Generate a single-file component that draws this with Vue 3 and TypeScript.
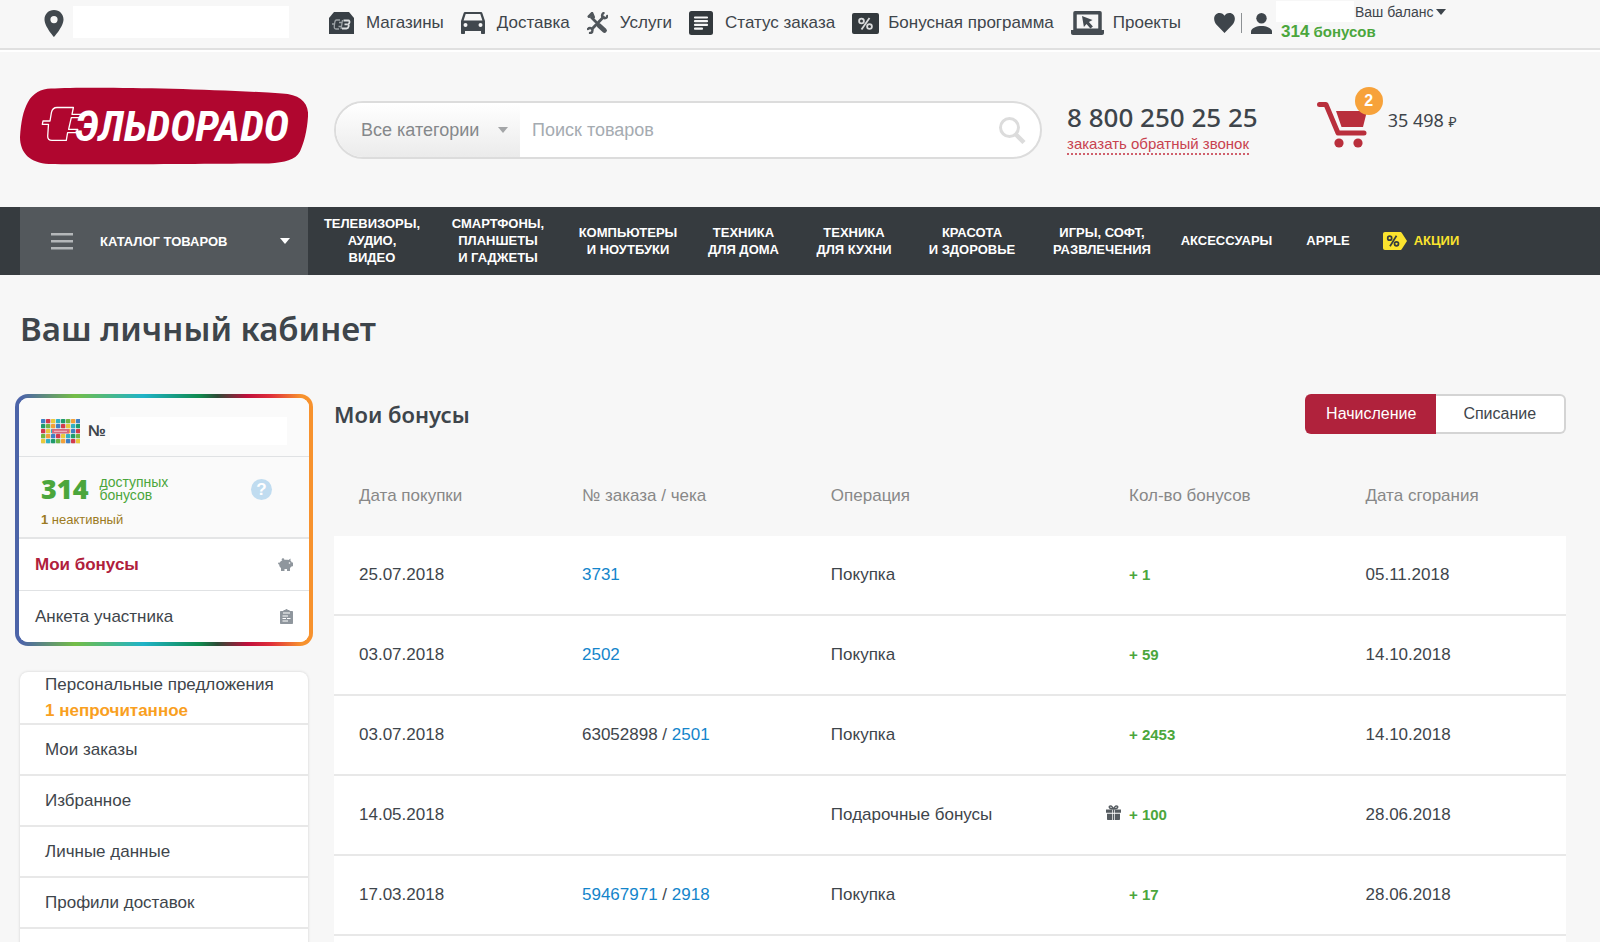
<script setup lang="ts">
import { ref } from 'vue'

interface OrderRef {
  text: string
  link: boolean
}

interface BonusRow {
  date: string
  order: OrderRef[]
  operation: string
  amount: string
  gift?: boolean
  expires: string
}

const categories: string[][] = [
  ['Телевизоры,', 'аудио,', 'видео'],
  ['Смартфоны,', 'планшеты', 'и гаджеты'],
  ['Компьютеры', 'и ноутбуки'],
  ['Техника', 'для дома'],
  ['Техника', 'для кухни'],
  ['Красота', 'и здоровье'],
  ['Игры, софт,', 'развлечения'],
  ['Аксессуары'],
  ['Apple'],
]

const rows: BonusRow[] = [
  { date: '25.07.2018', order: [{ text: '3731', link: true }], operation: 'Покупка', amount: '+ 1', expires: '05.11.2018' },
  { date: '03.07.2018', order: [{ text: '2502', link: true }], operation: 'Покупка', amount: '+ 59', expires: '14.10.2018' },
  { date: '03.07.2018', order: [{ text: '63052898', link: false }, { text: '2501', link: true }], operation: 'Покупка', amount: '+ 2453', expires: '14.10.2018' },
  { date: '14.05.2018', order: [], operation: 'Подарочные бонусы', amount: '+ 100', gift: true, expires: '28.06.2018' },
  { date: '17.03.2018', order: [{ text: '59467971', link: true }, { text: '2918', link: true }], operation: 'Покупка', amount: '+ 17', expires: '28.06.2018' },
]

const accountLinks: string[] = ['Мои заказы', 'Избранное', 'Личные данные', 'Профили доставок']

const palette = ['#3f7fc4', '#6fb544', '#2fb0c4', '#d23a4c', '#f2a03a', '#1f9a6a', '#e9c93c']
const tiles = Array.from({ length: 40 }, (_, i) => ({
  x: (i % 8) * 5,
  y: Math.floor(i / 8) * 5,
  fill: palette[(i * 3 + Math.floor(i / 8) * 2) % palette.length],
}))

const query = ref('')
const category = ref('all')
const tab = ref<'accrual' | 'writeoff'>('accrual')
</script>

<template>
  <div class="page">
    <header>
      <div class="topbar">
        <a class="pin" href="#" aria-label="Ваш город">
          <svg width="20" height="27" viewBox="0 0 20 27">
            <path fill="#41484e" fill-rule="evenodd" d="M10 0C4.4 0 .5 4.200.5 9.500.5 16.500 10 27 10 27s9.500-10.500 9.500-17.500C19.500 4.200 15.600 0 10 0zm0 13.200a3.600 3.600 0 1 1 0-7.200 3.600 3.600 0 0 1 0 7.200z" />
          </svg>
        </a>
        <div class="city"></div>
        <nav class="services">
          <a href="#">
            <svg width="25" height="22" viewBox="0 0 25 22">
              <path fill="#394046" d="M5 0h15l5 6v16H0V6z" />
              <g fill="none" stroke="#9da2a6" stroke-width="1.300">
                <path d="M3 12h2M11 8H7.500C6 8 6 9 5.700 11l-.4 3c-.2 2 .2 3 1.700 3h3" />
                <path stroke="#dcdedf" stroke-width="1.800" d="M14.500 8.500h5c1.600 0 1.300 3.500-.7 3.800 1.600.4 1 4.200-1.300 4.200H13M15.500 12.300h3" />
                <path d="M10 10.500h2.500M9.500 14.500H12M13.500 8l-1.400 9" />
              </g>
            </svg>
            Магазины
          </a>
          <a href="#">
            <svg width="24" height="22" viewBox="0 0 24 22">
              <path fill="#41484e" fill-rule="evenodd" d="M4.500 0h15c1 0 1.700.5 2 1.400L24 9v12c0 .6-.4 1-1 1h-2c-.6 0-1-.4-1-1v-2H4v2c0 .6-.4 1-1 1H1c-.6 0-1-.4-1-1V9l2.500-7.600C2.800.5 3.500 0 4.500 0zm.2 2L2.600 8.500h18.800L19.300 2zM4.500 11a2 2 0 1 0 0 4 2 2 0 0 0 0-4zm15 0a2 2 0 1 0 0 4 2 2 0 0 0 0-4z" />
            </svg>
            Доставка
          </a>
          <a href="#">
            <svg width="21" height="22" viewBox="0 0 21 22">
              <g fill="none" stroke="#50565b" stroke-linecap="round">
                <path stroke-width="2.800" d="M4.500 5.500L9 10M16.500 5L5 17" />
                <path stroke-width="4.800" d="M12 13.500l5.500 5" />
                <path stroke-width="3" d="M2 4.500L5 1.500 6.500 5" />
                <path stroke-width="2.400" d="M16.500 1c-2 1.500-2 4 0 5 1.500.6 3.500 0 3.700-2M1 17c1.500-1.600 4.500-1 4.500 1.200 0 1.500-1 2.800-2.500 2.800" />
              </g>
            </svg>
            Услуги
          </a>
          <a href="#">
            <svg width="24" height="24" viewBox="0 0 24 24">
              <rect width="24" height="24" rx="2.500" fill="#33393d" />
              <path stroke="#f7f7f7" stroke-width="2.200" stroke-linecap="round" d="M6 6.500h12M6 10.200h12M6 13.900h12M6 17.700h7" />
            </svg>
            Статус заказа
          </a>
          <a class="tight" href="#">
            <svg width="27" height="21" viewBox="0 0 27 21">
              <rect width="27" height="21" rx="2" fill="#33393d" />
              <g fill="none" stroke="#d9dadb" stroke-width="1.800">
                <circle cx="9.500" cy="8" r="2.400" /><circle cx="17.500" cy="13.500" r="2.400" />
                <path d="M17.500 5L9.500 16.500" />
              </g>
            </svg>
            Бонусная программа
          </a>
          <a class="tight" href="#">
            <svg width="33" height="24" viewBox="0 0 33 24">
              <path fill="none" stroke="#454c52" stroke-width="3.500" stroke-linejoin="round" d="M4 1.800h25v17.500H4z" />
              <path fill="#454c52" d="M0 19h33v3c0 1.200-.8 2-2 2H2c-1.200 0-2-.8-2-2zM11 5l10.500 4-3.600 2 4 4.600-2.500 2-3.900-4.700-2.600 3z" />
            </svg>
            Проекты
          </a>
        </nav>
        <div class="user">
          <a href="#" aria-label="Избранное">
            <svg width="21" height="20" viewBox="0 0 21 20">
              <path fill="#3e454b" d="M10.500 20L3 12.200C-2 7 0 0 5.600 0c2.300 0 4 1.200 4.900 2.800C11.400 1.200 13.100 0 15.400 0 21 0 23 7 18 12.200z" />
            </svg>
          </a>
          <span class="rule"></span>
          <a href="#" aria-label="Профиль">
            <svg width="21" height="21" viewBox="0 0 21 21">
              <circle cx="10.500" cy="5.200" r="5.200" fill="#3e454b" />
              <path fill="#3e454b" d="M0 21v-2.500c0-3.500 6-5.500 10.500-5.500S21 15 21 18.500V21z" />
            </svg>
          </a>
          <div class="balance">
            <div class="balance-top">
              <span class="username"></span>
              <button type="button" class="balance-menu">
                Ваш баланс
                <svg width="10" height="6" viewBox="0 0 10 6"><path fill="#3e454b" d="M0 0h10L5 6z" /></svg>
              </button>
            </div>
            <a class="balance-sum" href="#"><b>314</b> бонусов</a>
          </div>
        </div>
      </div>

      <div class="masthead">
        <a class="logo" href="#" aria-label="Эльдорадо">
          <svg width="288" height="78" viewBox="0 0 288 78">
            <path fill="#b0062f" d="M31 1.500C66-.5 180 1 262 6.500c18 1 27 9 26 23-1 15-4 26-8 35-5 9-15 10.500-31 12C200 76.500 90 78 29 77 10 76 0 66 0 50 1 35 3 24 8 15 13 6 21 2 31 1.500z" />
            <path fill="none" stroke="#fff" stroke-width="1.300" stroke-linejoin="round" d="M37 20.500h16.400L52 27.300h9l-1 3.400h-8.700l-2.700 11.600h9.200l-1.100 3.400h-9.100l-1.300 7.600H32c-3 0-4.500-1.500-4.300-4.300l.8-11.700h-6.200L23 34h7l1.400-8.300c.6-3.200 2.400-5.200 5.600-5.200z" />
            <text x="55" y="54" class="logo-text">ЭЛЬDОРАDО</text>
          </svg>
        </a>
        <form class="search" @submit.prevent>
          <div class="category">
            <select v-model="category" aria-label="Категория">
              <option value="all">Все категории</option>
            </select>
            <svg width="10" height="6" viewBox="0 0 10 6"><path fill="#a3a5a7" d="M0 0h10L5 6z" /></svg>
          </div>
          <input v-model="query" type="search" placeholder="Поиск товаров" aria-label="Поиск товаров" />
          <button type="submit" aria-label="Найти">
            <svg width="27" height="27" viewBox="0 0 27 27">
              <circle cx="10.500" cy="10.500" r="9" fill="none" stroke="#dcdcdc" stroke-width="3" />
              <path stroke="#dcdcdc" stroke-width="4.500" d="M16.500 17l8.500 8.500" />
            </svg>
          </button>
        </form>
        <div class="phone">
          <a class="number" href="tel:88002502525">8 800 250 25 25</a>
          <button type="button" class="callback">заказать обратный звонок</button>
        </div>
        <a class="cart" href="#">
          <span class="cart-icon">
            <svg width="50" height="46" viewBox="0 0 50 46">
              <path fill="none" stroke="#b92f3c" stroke-width="5" stroke-linejoin="round" stroke-linecap="round" d="M2.500 2.500H9L21 31h26" />
              <path fill="#b92f3c" d="M19 9h31l-4 16H24.500z" />
              <circle cx="22" cy="41" r="4.600" fill="#b92f3c" /><circle cx="41" cy="41" r="4.600" fill="#b92f3c" />
            </svg>
            <span class="badge">2</span>
          </span>
          <span class="total">35 498 <small>₽</small></span>
        </a>
      </div>

      <nav class="catalog">
        <button type="button" class="catalog-button">
          <svg width="22" height="17" viewBox="0 0 22 17"><path fill="#b4b7b9" d="M0 0h22v2.500H0zM0 7h22v2.500H0zM0 14h22v2.500H0z" /></svg>
          <span>Каталог товаров</span>
          <svg width="10" height="6" viewBox="0 0 10 6"><path fill="#fff" d="M0 0h10L5 6z" /></svg>
        </button>
        <div class="catalog-links">
          <a v-for="(lines, i) in categories" :key="i" href="#">
            <span v-for="line in lines" :key="line">{{ line }}</span>
          </a>
          <a class="sale" href="#">
            <svg width="24" height="18" viewBox="0 0 24 18">
              <path fill="#fbe32e" d="M2 0h15c1 0 1.600.4 2 1.200L24 9l-5 7.800c-.4.8-1 1.200-2 1.200H2c-1.200 0-2-.8-2-2V2C0 .8.8 0 2 0z" />
              <g fill="none" stroke="#363b3f" stroke-width="1.700"><circle cx="6.700" cy="6.200" r="2" /><circle cx="13.500" cy="11.800" r="2" /><path d="M13.500 3.800L7 14.200" /></g>
            </svg>
            Акции
          </a>
        </div>
      </nav>
    </header>

    <main>
      <h1>Ваш личный кабинет</h1>
      <div class="columns">
        <aside>
          <section class="bonus-card">
            <div class="card-number">
              <svg width="39" height="25" viewBox="0 0 39 25">
                <rect width="39" height="25" fill="#e9edef" />
                <rect v-for="(t, i) in tiles" :key="i" :x="t.x" :y="t.y" width="4.300" height="4.300" rx=".8" :fill="t.fill" />
                <path fill="#d8697c" d="M11 10h17v4.500H11z" />
                <path stroke="#f3c5cc" d="M13 12.300h13" />
              </svg>
              <b>№</b>
              <span class="number-value"></span>
            </div>
            <div class="card-balance">
              <div class="balance-line">
                <strong>314</strong>
                <span>доступных<br />бонусов</span>
                <button type="button" aria-label="Справка">?</button>
              </div>
              <p><b>1</b> неактивный</p>
            </div>
            <a class="card-link active" href="#">
              Мои бонусы
              <svg width="15" height="13" viewBox="0 0 15 13">
                <path fill="#8f969d" d="M4 2.500C5.500 1.500 9 1.500 10.500 2l2-1.500v2.300c.7.500 1 1 1.300 1.700H15v3.700h-1.300c-.4.700-1 1.200-1.700 1.600V13H9v-2H6.500v2H3V9.900C1.700 9 1.200 8 1.200 6.500L0 6l.4-1.500 1.200.3c.4-1 1.400-1.800 2.400-2.300z" />
                <circle cx="5" cy="1.600" r="1.300" fill="#8f969d" />
                <circle cx="11.500" cy="5" r=".8" fill="#fff" />
              </svg>
            </a>
            <a class="card-link" href="#">
              Анкета участника
              <svg width="13" height="15" viewBox="0 0 13 15">
                <path fill="#8f969d" d="M1 2h2.500V1h1.700C5.400.4 5.900 0 6.500 0s1.100.4 1.300 1h1.700v1H12c.6 0 1 .4 1 1v11c0 .6-.4 1-1 1H1c-.6 0-1-.4-1-1V3c0-.6.400-1 1-1z" />
                <path stroke="#fff" stroke-width="1.200" d="M3 4h7M2.500 7h5.500M2.500 9.500h3.500M7 9.500h3.500M2.500 12h5.500" />
              </svg>
            </a>
          </section>
          <nav class="account-menu">
            <a class="offers" href="#">Персональные предложения<b>1 непрочитанное</b></a>
            <a v-for="link in accountLinks" :key="link" href="#">{{ link }}</a>
            <a href="#" aria-label="Ещё"></a>
          </nav>
        </aside>

        <section class="bonuses">
          <div class="bonuses-head">
            <h2>Мои бонусы</h2>
            <div class="toggle">
              <button type="button" :class="{ on: tab === 'accrual' }" :aria-pressed="tab === 'accrual'" @click="tab = 'accrual'">Начисление</button>
              <button type="button" :class="{ on: tab === 'writeoff' }" :aria-pressed="tab === 'writeoff'" @click="tab = 'writeoff'">Списание</button>
            </div>
          </div>
          <table>
            <colgroup><col class="c1" /><col class="c2" /><col class="c3" /><col class="c4" /><col class="c5" /></colgroup>
            <thead>
              <tr>
                <th>Дата покупки</th>
                <th>№ заказа / чека</th>
                <th>Операция</th>
                <th>Кол-во бонусов</th>
                <th>Дата сгорания</th>
              </tr>
            </thead>
            <tbody>
              <tr v-for="(row, i) in rows" :key="i">
                <td>{{ row.date }}</td>
                <td>
                  <template v-for="(part, j) in row.order" :key="j">
                    <template v-if="j > 0"> / </template>
                    <a v-if="part.link" href="#">{{ part.text }}</a>
                    <template v-else>{{ part.text }}</template>
                  </template>
                </td>
                <td>{{ row.operation }}</td>
                <td class="amount">
                  <span class="slot">
                    <svg v-if="row.gift" width="15" height="15" viewBox="0 0 15 15">
                      <path fill="#565c61" d="M0 4.500h6.300v3.300H0zM8.700 4.500H15v3.300H8.700zM7 4.500h1v3.300H7zM1 8.800h5.300V15H2c-.6 0-1-.4-1-1zM8.700 8.800H14V14c0 .6-.4 1-1 1H8.700zM7 8.800h1V15H7z" />
                      <path fill="none" stroke="#565c61" stroke-width="1.500" d="M7.500 4C6 1 4.500.4 3.600 1.300 2.700 2.500 4 4 7.500 4zm0 0C9 1 10.500.4 11.400 1.300 12.300 2.500 11 4 7.500 4z" />
                    </svg>
                  </span>{{ row.amount }}
                </td>
                <td>{{ row.expires }}</td>
              </tr>
              <tr class="next"><td colspan="5"></td></tr>
            </tbody>
          </table>
        </section>
      </div>
    </main>
  </div>
</template>

<style>
body {
  margin: 0;
  background: #f7f7f7;
}
</style>

<style scoped>
.page {
  max-height: 100vh;
  overflow: hidden;
  background: #f7f7f7;
  color: #3e454b;
  font: 17px/20px "Liberation Sans", Arial, sans-serif;
}
.page *, .page *::before { box-sizing: border-box; }
a { color: inherit; text-decoration: none; }
button { border: 0; padding: 0; background: none; color: inherit; font: inherit; cursor: pointer; }
svg { display: block; flex: none; }

.topbar {
  display: flex;
  align-items: center;
  height: 50px;
  padding: 0 20px 2px 44px;
  border-bottom: 2px solid #e0e0e0;
  box-shadow: 0 2px 0 #fff;
}
.city { width: 216px; height: 32px; margin: 0 40px 2px 9px; background: #fff; }
.services { display: flex; align-items: center; gap: 17px; white-space: nowrap; }
.services a { display: flex; align-items: center; gap: 12px; }
.services a.tight { gap: 9px; }
.user { display: flex; align-items: center; margin-left: 33px; }
.rule { width: 1px; height: 20px; margin: 0 9px 0 6px; background: #8d9194; }
.balance { height: 44px; margin-left: 4px; white-space: nowrap; }
.balance-top { display: flex; align-items: center; height: 21px; }
.username { width: 78px; height: 21px; background: #fff; }
.balance-menu { display: flex; align-items: center; gap: 3px; margin-left: 1px; font-size: 14px; }
.balance-sum { display: block; padding-left: 5px; color: #4ba63c; font-weight: bold; font-size: 15px; line-height: 20px; }
.balance-sum b { font-size: 17px; }

.masthead { display: flex; align-items: flex-start; height: 157px; padding: 37px 20px 0; }
.logo-text { fill: #fff; font: italic bold 43px "Liberation Sans Narrow", "Roboto Condensed", "Liberation Sans", sans-serif; }
.search {
  display: flex;
  flex: 0 1 708px;
  height: 58px;
  margin: 14px 0 0 26px;
  overflow: hidden;
  border: 2px solid #dcdcdc;
  border-radius: 29px;
  background: #fff;
}
.category { display: flex; align-items: center; width: 184px; padding-right: 12px; background: linear-gradient(#fff, #ebebeb); }
.category select {
  flex: 1;
  height: 54px;
  padding: 0 0 0 25px;
  border: 0;
  background: none;
  appearance: none;
  color: #85888b;
  font: 18px/24px "Liberation Sans", Arial, sans-serif;
}
.search input {
  flex: 1;
  min-width: 0;
  padding: 0 12px;
  border: 0;
  outline: 0;
  background: none;
  color: #3e454b;
  font: 18px/24px "Liberation Sans", Arial, sans-serif;
}
.search input::placeholder { color: #a5abb1; opacity: 1; }
.search button { padding: 0 14px 0 0; }
.phone { display: flex; flex-direction: column; align-items: flex-start; margin: 13px 0 0 25px; white-space: nowrap; }
.number { font: 500 26px/35px "Noto Sans", sans-serif; }
.callback { border-bottom: 2px dotted #d0606c; color: #c8424f; font-size: 15px; line-height: 18px; }
.cart { display: flex; align-items: center; margin: 15px 0 0 59px; white-space: nowrap; }
.cart-icon { position: relative; }
.badge {
  position: absolute;
  top: -15px;
  right: -16px;
  width: 28px;
  height: 28px;
  border-radius: 50%;
  background: #f7a23a;
  color: #fff;
  font: bold 16px/28px "Liberation Sans", Arial, sans-serif;
  text-align: center;
}
.total { margin: 0 0 8px 21px; font: 18px/24px "Noto Sans", sans-serif; }
.total small { font-size: 14px; }

.catalog { display: flex; height: 68px; padding-left: 20px; background: #363b3f; color: #fff; font-weight: bold; font-size: 13px; line-height: 17px; text-transform: uppercase; white-space: nowrap; }
.catalog-button { display: flex; flex: 0 0 288px; align-items: center; padding: 0 18px 0 31px; background: #53585c; text-transform: uppercase; }
.catalog-button span { flex: 1; padding-left: 27px; text-align: left; }
.catalog-links { display: grid; flex: 1; grid-template-columns: 128fr 124fr 136fr 95fr 126fr 110fr 150fr 99fr 104fr 82fr 138fr; padding-bottom: 1px; }
.catalog-links a { display: flex; flex-direction: column; align-items: center; justify-content: center; min-width: 0; }
.catalog-links a.sale { flex-direction: row; gap: 7px; color: #fbe32e; }

main { padding: 0 34px 0 20px; }
h1 { margin: 0; padding: 29px 0 40px; font: 600 33px/50px "Noto Sans", sans-serif; }
.columns { display: flex; align-items: flex-start; gap: 26px; }
aside { flex: 0 0 288px; }
.bonus-card {
  margin: 0 -5px 26px;
  overflow: hidden;
  border: 4px solid transparent;
  border-radius: 13px;
  background:
    linear-gradient(#fff, #fff) padding-box,
    linear-gradient(90deg, #4c64a8 2%, #74bd46 20%, #1fb3c8 43%, #108a4e 62%, #2e4a36 68%, #c00f3c 78%, #e0303a 86%, #f7922e 96%) border-box;
}
.card-number { display: flex; align-items: center; height: 59px; padding: 8px 22px 0; border-bottom: 1px solid #e0e2e4; background: #fafafa; }
.card-number b { margin-left: 8px; font-weight: bold; font-size: 16px; }
.number-value { flex: 1; height: 28px; margin-left: 4px; background: #fff; }
.card-balance { height: 82px; padding: 18px 37px 0 22px; border-bottom: 2px solid #e4e5e6; background: #fafafa; }
.balance-line { display: flex; align-items: center; height: 28px; color: #4ba63c; }
.balance-line strong { font: 900 27px/28px "Noto Sans", sans-serif; }
.balance-line span { flex: 1; margin-left: 11px; font-size: 14px; line-height: 13px; }
.balance-line button { width: 21px; height: 21px; border-radius: 50%; background: #c0dcf0; color: #fff; font-weight: bold; font-size: 17px; line-height: 21px; }
.card-balance p { margin: 7px 0 0; color: #9c7a22; font-size: 13px; line-height: 20px; }
.card-link { display: flex; align-items: center; justify-content: space-between; height: 51px; padding: 0 16px; background: #fff; }
.card-link.active { height: 52px; border-bottom: 1px solid #e0e2e4; color: #b0203c; font-weight: bold; }
.account-menu { overflow: hidden; border-radius: 8px; background: #fff; box-shadow: 0 0 3px rgb(0 0 0 / 16%); }
.account-menu a { display: flex; align-items: center; height: 51px; padding: 0 25px; border-bottom: 2px solid #e8e8e8; white-space: nowrap; }
.account-menu a.offers { display: block; height: 53px; line-height: 26px; }
.offers b { display: block; color: #f9a01f; }

.bonuses { flex: 1; min-width: 0; }
.bonuses-head { display: flex; align-items: center; justify-content: space-between; height: 40px; }
h2 { margin: 0; font: 600 22px/32px "Noto Sans", sans-serif; }
.toggle { display: flex; width: 261px; height: 40px; }
.toggle button { flex: 1; border: 2px solid #d4d4d4; background: #fff; font-size: 16px; }
.toggle button:first-child { border-right: 0; border-radius: 6px 0 0 6px; }
.toggle button:last-child { border-left: 0; border-radius: 0 6px 6px 0; }
.toggle button.on { border-color: #b0223c; background: #b0223c; color: #fff; }
table { width: 100%; table-layout: fixed; border-collapse: separate; border-spacing: 0; }
.c1 { width: 18.100%; }
.c2 { width: 20.200%; }
.c3 { width: 24.200%; }
.c4 { width: 19.200%; }
.c5 { width: 18.300%; }
th { height: 102px; padding: 22px 0 0 25px; color: #888; font-weight: normal; text-align: left; }
td { height: 80px; padding: 0 0 0 25px; border-bottom: 2px solid #e8e8e8; background: #fff; white-space: nowrap; }
td a { color: #1385cb; }
td.amount { padding-left: 2px; color: #4ba63c; font-weight: bold; font-size: 15px; }
.slot { display: inline-block; width: 23px; vertical-align: baseline; }
</style>
